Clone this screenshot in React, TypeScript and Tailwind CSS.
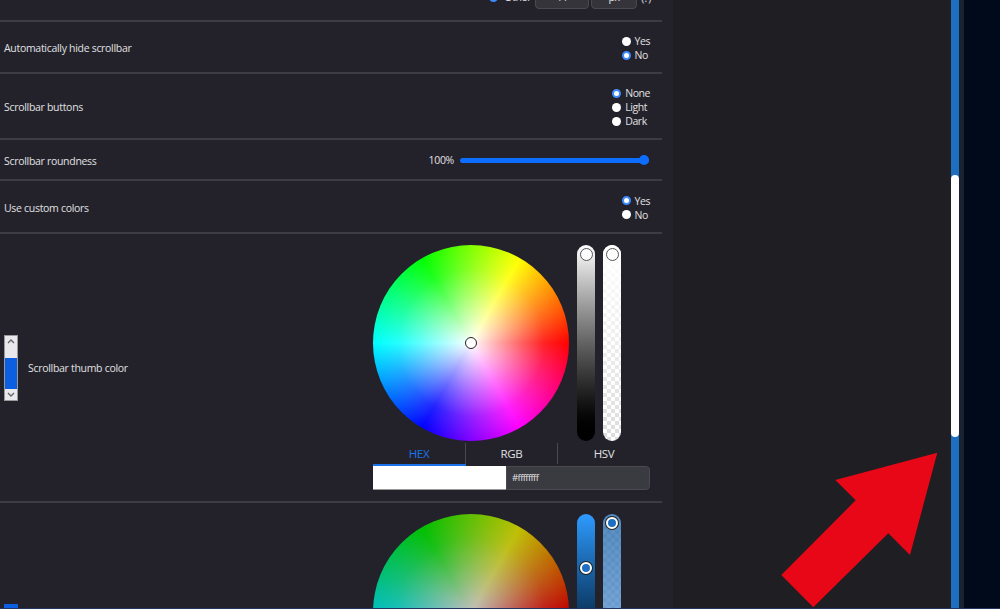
const checker =
  'bg-[conic-gradient(#d8d8d8_25%,#ffffff_0_50%,#d8d8d8_0_75%,#ffffff_0)] bg-[length:8px_8px]';

function Radio({ label, checked }: { label: string; checked?: boolean }) {
  return (
    <div className="flex items-center h-[14px] gap-[4px]">
      {checked ? (
        <span className="w-[9px] h-[9px] rounded-full bg-white border-[2px] border-[#3d8bfd]" />
      ) : (
        <span className="w-[9px] h-[9px] rounded-full bg-white" />
      )}
      <span className="pt-[2px] tracking-[-0.45px]">{label}</span>
    </div>
  );
}

function Row({ height, label, children }: { height: string; label: string; children?: React.ReactNode }) {
  return (
    <div className={`${height} flex items-center justify-between border-b-2 border-[#3d3c43] pl-1 pr-3`}>
      <span className="mt-[4px]">{label}</span>
      {children}
    </div>
  );
}

function Wheel({ dim }: { dim?: boolean }) {
  return (
    <div className={`relative w-[196px] h-[196px] rounded-full bg-[conic-gradient(from_90deg,#ff0000,#ff00ff,#0000ff,#00ffff,#00ff00,#ffff00,#ff0000)] ${dim ? 'brightness-75' : ''}`}>
      <div className="absolute inset-0 rounded-full bg-[radial-gradient(circle_closest-side,#ffffff_0%,#ffffffb0_25%,#ffffff66_50%,#ffffff22_75%,#ffffff00_100%)]" />
    </div>
  );
}

function Tabs() {
  return (
    <div className="flex h-[23px] text-[11.5px] w-[277px]">
      <div className="w-[93px] flex flex-col">
        <div className="flex-1 flex items-center justify-center pt-[1px] text-[#1a73e8] border-r border-[#4a4950]">HEX</div>
        <div className="h-[2px] bg-[#1a73e8]" />
      </div>
      <div className="w-[92px] flex items-center justify-center pt-[1px] border-r border-[#4a4950] mb-[2px]">RGB</div>
      <div className="w-[92px] flex items-center justify-center pt-[1px] mb-[2px]">HSV</div>
    </div>
  );
}

export default function App() {
  return (
    <div className="relative w-[1000px] h-[609px] overflow-hidden flex bg-[#1f1e22] text-[#e0e0e2] text-[10.5px] tracking-[-0.3px] font-['Open_Sans',sans-serif]">
      <div className="w-[673px] h-full bg-[#23222b] pr-[11px] shrink-0 overflow-hidden">
        <div className="h-[22px] border-b-2 border-[#3d3c43] flex justify-end items-start pr-[11px]">
          <div className="flex items-start gap-[2px] -mt-[14px]">
            <span className="w-[9px] h-[9px] rounded-full bg-white border-[2px] border-[#3d8bfd] mt-[7px] mr-[4px]" />
            <span className="mr-[2px] mt-[4px]">Other</span>
            <span className="w-[54px] h-[23px] bg-[#35343b] border border-[#4a4950] rounded-sm text-center pt-[3px]">11</span>
            <span className="w-[46px] h-[23px] bg-[#35343b] border border-[#4a4950] rounded-sm text-center pt-[3px]">px</span>
            <span className="ml-[2px] mt-[5px]">(?)</span>
          </div>
        </div>
        <Row height="h-[52px]" label="Automatically hide scrollbar">
          <div className="flex flex-col mt-[2px]">
            <Radio label="Yes" />
            <Radio label="No" checked />
          </div>
        </Row>
        <Row height="h-[66px]" label="Scrollbar buttons">
          <div className="flex flex-col mt-[2px]">
            <Radio label="None" checked />
            <Radio label="Light" />
            <Radio label="Dark" />
          </div>
        </Row>
        <Row height="h-[41px]" label="Scrollbar roundness">
          <div className="flex items-center gap-[6px] pr-[1px] mt-[1px]">
            <span className="mt-[1px]">100%</span>
            <div className="relative w-[189px] h-[5px] rounded-full bg-[#0d6efd]">
              <span className="absolute right-0 -top-[2.5px] w-[10px] h-[10px] rounded-full bg-[#0d6efd]" />
            </div>
          </div>
        </Row>
        <Row height="h-[53px]" label="Use custom colors">
          <div className="flex flex-col mt-[2px]">
            <Radio label="Yes" checked />
            <Radio label="No" />
          </div>
        </Row>

        {/* thumb color */}
        <div className="h-[269px] border-b-2 border-[#3d3c43] flex pl-1 pr-3 justify-between">
          <div className="flex items-center gap-[10px] h-full">
            <div className="w-[14px] h-[66px] bg-[#e9e9ed] border border-[#999] flex flex-col items-center">
              <svg width="10" height="11" viewBox="0 0 10 11" fill="none" stroke="#666" strokeWidth="1.4"><path d="M2 7l3-3 3 3" /></svg>
              <div className="w-full h-[31px] mt-[11px] bg-[#0b5fe0]" />
              <svg width="10" height="11" viewBox="0 0 10 11" fill="none" stroke="#666" strokeWidth="1.4"><path d="M2 4l3 3 3-3" /></svg>
            </div>
            <span className="mt-[2px]">Scrollbar thumb color</span>
          </div>
          <div className="w-[277px] pt-[11px]">
            <div className="flex">
              <div className="relative">
                <Wheel />
                <div className="absolute left-[92px] top-[92px] w-[12px] h-[12px] rounded-full border-[1.5px] border-[#222] bg-white" />
              </div>
              <div className="relative ml-[8px] w-[18px] h-[196px] rounded-full bg-gradient-to-b from-white to-black">
                <span className="absolute left-[2.5px] top-[3px] w-[13px] h-[13px] rounded-full border-[1.5px] border-[#555] bg-white/80" />
              </div>
              <div className={`relative ml-[8px] w-[18px] h-[196px] rounded-full overflow-hidden ${checker}`}>
                <div className="absolute inset-0 bg-gradient-to-b from-white to-white/10" />
                <span className="absolute left-[2.5px] top-[3px] w-[13px] h-[13px] rounded-full border-[1.5px] border-[#555] bg-white/80" />
              </div>
            </div>
            <div className="mt-[2px]">
              <Tabs />
            </div>
            <div className="flex h-[24px] w-[277px]">
              <div className="w-[133px] bg-white border-b border-[#999]" />
              <div className="flex-1 bg-[#3a3a41] border border-[#4a4950] rounded-r-sm flex items-center pl-[5px] text-[9.5px] tracking-[-0.6px]">#ffffffff</div>
            </div>
          </div>
        </div>

        {/* track color */}
        <div className="flex pl-1 pr-3 justify-between h-[120px]">
          <div className="flex items-end h-[106px]">
            <div className="w-[14px] h-[5px] bg-[#0b5fe0]" />
          </div>
          <div className="w-[277px] pt-[11px] flex">
            <Wheel dim />
            <div className="relative ml-[8px] w-[18px] h-[196px] rounded-full bg-gradient-to-b from-[#2e9bff] to-black">
              <span className="absolute left-[3px] top-[48px] w-[12px] h-[12px] rounded-full border-2 border-white bg-[#1f6fc0] ring-1 ring-[#222]" />
            </div>
            <div className="relative ml-[8px] w-[18px] h-[196px] rounded-full overflow-hidden bg-gradient-to-b from-[#2b6fb0] to-[#7ab0e8]">
              <div className={`absolute inset-0 opacity-20 ${checker}`} />
              <span className="absolute left-[3px] top-[3px] w-[12px] h-[12px] rounded-full border-2 border-white bg-[#1f6fc0] ring-1 ring-[#222]" />
            </div>
          </div>
        </div>
      </div>

      <div className="flex-1" />
      <div className="relative w-[8px] h-full bg-[#1f6fc0] shrink-0">
        <div className="absolute left-0 top-[175px] w-full h-[262px] rounded-full bg-white" />
      </div>
      <div className="w-[5px] h-full bg-[#1a2230] shrink-0" />
      <div className="w-[36px] h-full bg-[#010a1a] shrink-0" />

      {/* bottom edge */}
      <div className="absolute left-0 right-0 bottom-0 h-[1.5px] bg-[#23355c]" />

      {/* red annotation arrow */}
      <svg className="absolute left-0 top-0 pointer-events-none" width="1000" height="609" viewBox="0 0 1000 609">
        <polygon points="937.3,452.7 835.3,480 855.7,500.3 781.3,575 813.3,607.3 888.3,533.3 910,555" fill="#e80717" />
      </svg>
    </div>
  );
}
